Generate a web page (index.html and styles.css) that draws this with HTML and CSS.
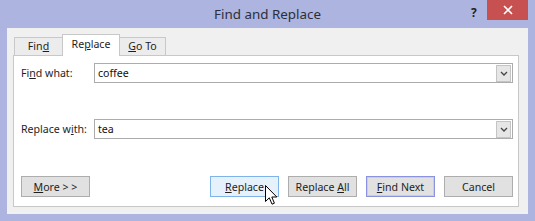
FILE: index.html
```html
<!DOCTYPE html>
<html>
<head>
<meta charset="utf-8">
<link rel="stylesheet" href="styles.css">
</head>
<body>
<div class="window">
  <div class="titlebar">
    <div class="title">Find and Replace</div>
    <div class="help">?</div>
    <div class="close">
      <svg width="10" height="10" viewBox="0 0 10 10"><path d="M1 1 L9 9 M9 1 L1 9" stroke="#fff" stroke-width="1.6"/></svg>
    </div>
  </div>
  <div class="client">
    <div class="tabs">
      <div class="tab">Fin<u>d</u></div>
      <div class="tab active">Re<u>p</u>lace</div>
      <div class="tab"><u>G</u>o To</div>
    </div>
    <div class="panel">
      <div class="row">
        <div class="label">Fi<u>n</u>d what:</div>
        <div class="combo"><span class="value">coffee</span><span class="drop"><svg width="8" height="5" viewBox="0 0 8 5"><path d="M1 1 L4 4 L7 1" fill="none" stroke="#444" stroke-width="1.3"/></svg></span></div>
      </div>
      <div class="row row2">
        <div class="label">Replace w<u>i</u>th:</div>
        <div class="combo"><span class="value">tea</span><span class="drop"><svg width="8" height="5" viewBox="0 0 8 5"><path d="M1 1 L4 4 L7 1" fill="none" stroke="#444" stroke-width="1.3"/></svg></span></div>
      </div>
      <div class="buttons">
        <div class="btn"><span><u>M</u>ore &gt; &gt;</span></div>
        <div class="spacer"></div>
        <div class="btn hover"><span><u>R</u>eplace</span></div>
        <div class="btn"><span>Replace <u>A</u>ll</span></div>
        <div class="btn default"><span><u>F</u>ind Next</span></div>
        <div class="btn"><span>Cancel</span></div>
      </div>
    </div>
  </div>
  <svg class="cursor" width="13" height="21" viewBox="0 0 13 21"><path d="M0.5 0.5 L0.5 16.5 L4.3 12.8 L7 19.2 L9.4 18.2 L6.8 12 L11.8 12 Z" fill="#fff" stroke="#000" stroke-width="1" stroke-linejoin="miter"/></svg>
</div>
</body>
</html>
```
FILE: styles.css
```css
* { box-sizing: border-box; }
html, body { margin: 0; padding: 0; }
body {
  width: 535px;
  height: 221px;
  overflow: hidden;
  background: #adb4df;
  font-family: "Noto Sans", "Open Sans", sans-serif;
  font-size: 10.6px;
  color: #1e1e1e;
}
.window {
  position: relative;
  width: 535px;
  height: 221px;
  display: flex;
  flex-direction: column;
}
.titlebar {
  height: 28px;
  position: relative;
  display: flex;
  justify-content: center;
}
.title {
  font-size: 13.4px;
  color: #2b2f3a;
  line-height: 28px;
}
.help {
  position: absolute;
  left: 471px;
  top: 4px;
  font-weight: bold;
  font-size: 12px;
  color: #222;
}
.close {
  position: absolute;
  left: 487px;
  top: 0;
  width: 41px;
  height: 20px;
  background: #c75151;
  display: flex;
  align-items: center;
  justify-content: center;
}
.client {
  margin: 0 7px;
  height: 186px;
  background: #f0f0f0;
  padding: 6px 9px 7px 6px;
  display: flex;
  flex-direction: column;
}
.tabs {
  display: flex;
  align-items: flex-end;
  height: 21px;
  padding-left: 1px;
  position: relative;
  z-index: 2;
}
.tab {
  height: 18px;
  border: 1px solid #c8c8c8;
  border-bottom: none;
  background: #ececec;
  line-height: 17px;
  margin-right: -1px;
  text-align: center;
}
.tab:first-child { width: 49px; }
.tab.active {
  height: 22px;
  margin-bottom: -1px;
  background: #fff;
  width: 58px;
  line-height: 19px;
}
.tab:last-child { width: 47px; }
.panel {
  flex: 1;
  background: #fff;
  border: 1px solid #c8c8c8;
  padding: 7px 5px 9px 7px;
  display: flex;
  flex-direction: column;
}
.row {
  display: flex;
  align-items: center;
  height: 20px;
}
.row2 { margin-top: 36px; }
.label {
  width: 73px;
  flex: none;
}
.combo {
  flex: 1;
  height: 20px;
  border: 1px solid #acacac;
  display: flex;
  align-items: center;
  justify-content: space-between;
  padding: 1px 1px 1px 3px;
}
.value { color: #111; }
.drop {
  width: 15px;
  height: 17px;
  background: #e6e6e6;
  border: 1px solid #c4c4c4;
  display: flex;
  align-items: center;
  justify-content: center;
}
.buttons {
  margin-top: auto;
  display: flex;
  gap: 9px;
}
.spacer { flex: 1; }
.btn {
  width: 69px;
  height: 21px;
  background: #e1e1e1;
  border: 1px solid #adadad;
  display: flex;
  align-items: center;
  justify-content: center;
  color: #1e1e1e;
}
.btn.hover {
  background: #e5f1fb;
  border-color: #7eb4ea;
}
.btn.default {
  border-color: #8b93e0;
  box-shadow: inset 0 0 0 1px #c9ccf0;
}
.cursor {
  position: absolute;
  left: 265px;
  top: 185px;
}
```
